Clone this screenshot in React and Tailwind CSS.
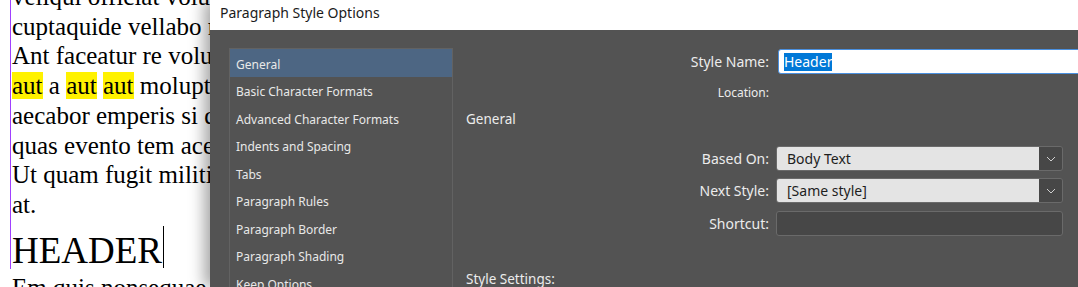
import React from "react";

const docLines = [
  "veliqui officiat voluptatem",
  "cuptaquide vellabo rerum",
  "Ant faceatur re voluptas",
];

const listItems = [
  "General",
  "Basic Character Formats",
  "Advanced Character Formats",
  "Indents and Spacing",
  "Tabs",
  "Paragraph Rules",
  "Paragraph Border",
  "Paragraph Shading",
  "Keep Options",
];

const Chevron = () => (
  <svg width="10" height="6" viewBox="0 0 10 6" fill="none">
    <path d="M1 1L5 5L9 1" stroke="#d0d0d0" strokeWidth="1" />
  </svg>
);

const Dropdown = ({ value }) => (
  <div className="flex h-[25px] w-[287px] overflow-hidden rounded-[3px] border border-[#6a6a6a]">
    <div className="flex flex-1 items-center bg-[#e4e4e4] pl-[10px] text-[14px] text-[#1e1e1e]">
      {value}
    </div>
    <div className="flex w-[23px] items-center justify-center bg-[#474747]">
      <Chevron />
    </div>
  </div>
);

const FormRow = ({ label, children, className = "" }) => (
  <div className={`flex shrink-0 items-center gap-[7px] ${className}`}>
    <div className="w-[316px] text-right text-[14px] text-[#ececec]">{label}</div>
    {children}
  </div>
);

export default function App() {
  return (
    <div className="flex h-[287px] w-[1078px] overflow-hidden bg-white">
      {/* document behind the dialog */}
      <div className="w-[210px] shrink-0 overflow-hidden bg-white pl-[10px]">
        <div className="h-full whitespace-nowrap border-l border-[#a040ff] pl-px font-['Liberation_Serif',serif] text-[25px] leading-[29.7px] text-black">
          <div className="-mt-[18px]">
            {docLines.map((line) => (
              <div key={line}>{line}</div>
            ))}
            <div>
              <span className="bg-[#fff200]">aut</span> a{" "}
              <span className="bg-[#fff200]">aut</span>{" "}
              <span className="bg-[#fff200]">aut</span> molupta
            </div>
            <div>aecabor emperis si dolor</div>
            <div>quas evento tem aceatem</div>
            <div>Ut quam fugit militia</div>
            <div>at.</div>
            <div className="mt-[6px] text-[37px] leading-[44px]">
              HEADER
              <span className="ml-px inline-block h-[42px] w-px bg-black align-[-5px]" />
            </div>
            <div>Em quis nonsequae</div>
          </div>
        </div>
      </div>

      {/* dialog */}
      <div className="relative z-10 flex flex-1 flex-col overflow-hidden font-['Noto_Sans',sans-serif] shadow-[-6px_0_14px_rgba(0,0,0,0.35)]">
        <div className="flex h-[30px] shrink-0 items-center bg-white pb-[5px] pl-[10px] text-[14px] text-[#1b1b1b]">
          Paragraph Style Options
        </div>

        <div className="flex min-h-0 flex-1 bg-[#535353] pl-[19px] pt-[18px]">
          <div className="w-[224px] shrink-0 border-l border-r border-t border-[#626262]">
            {listItems.map((item, i) => (
              <div
                key={item}
                className={`flex h-[27.5px] shrink-0 items-center pl-[6px] pt-[4px] text-[12px] text-[#e8e8e8] ${
                  i === 0 ? "bg-[#4d6683]" : ""
                }`}
              >
                {item}
              </div>
            ))}
          </div>

          <div className="flex flex-1 flex-col">
            <FormRow label="Style Name:" className="mt-px">
              <div className="ml-[2px] flex h-[25px] w-[320px] shrink-0 items-center rounded-[3px] border border-[#4a90e0] bg-white pl-[5px]">
                <span className="bg-[#0078d7] text-[14px] leading-[18px] text-white">Header</span>
              </div>
            </FormRow>

            <div className="mt-[10px] flex h-[18px] shrink-0 items-center">
              <div className="w-[316px] text-right text-[12px] text-[#ececec]">Location:</div>
            </div>

            <div className="mt-[8px] flex h-[18px] shrink-0 items-center pl-[13px] text-[13.5px] text-[#ececec]">
              General
            </div>

            <FormRow label="Based On:" className="mt-[18px]">
              <Dropdown value="Body Text" />
            </FormRow>
            <FormRow label="Next Style:" className="mt-[7px]">
              <Dropdown value="[Same style]" />
            </FormRow>
            <FormRow label="Shortcut:" className="mt-[8px]">
              <div className="h-[25px] w-[287px] rounded-[3px] border border-[#6a6a6a] bg-[#474747]" />
            </FormRow>

            <div className="mt-[34px] flex h-[18px] shrink-0 items-center pl-[13px] text-[13.5px] text-[#ececec]">
              Style Settings:
            </div>
          </div>
        </div>
      </div>
    </div>
  );
}
